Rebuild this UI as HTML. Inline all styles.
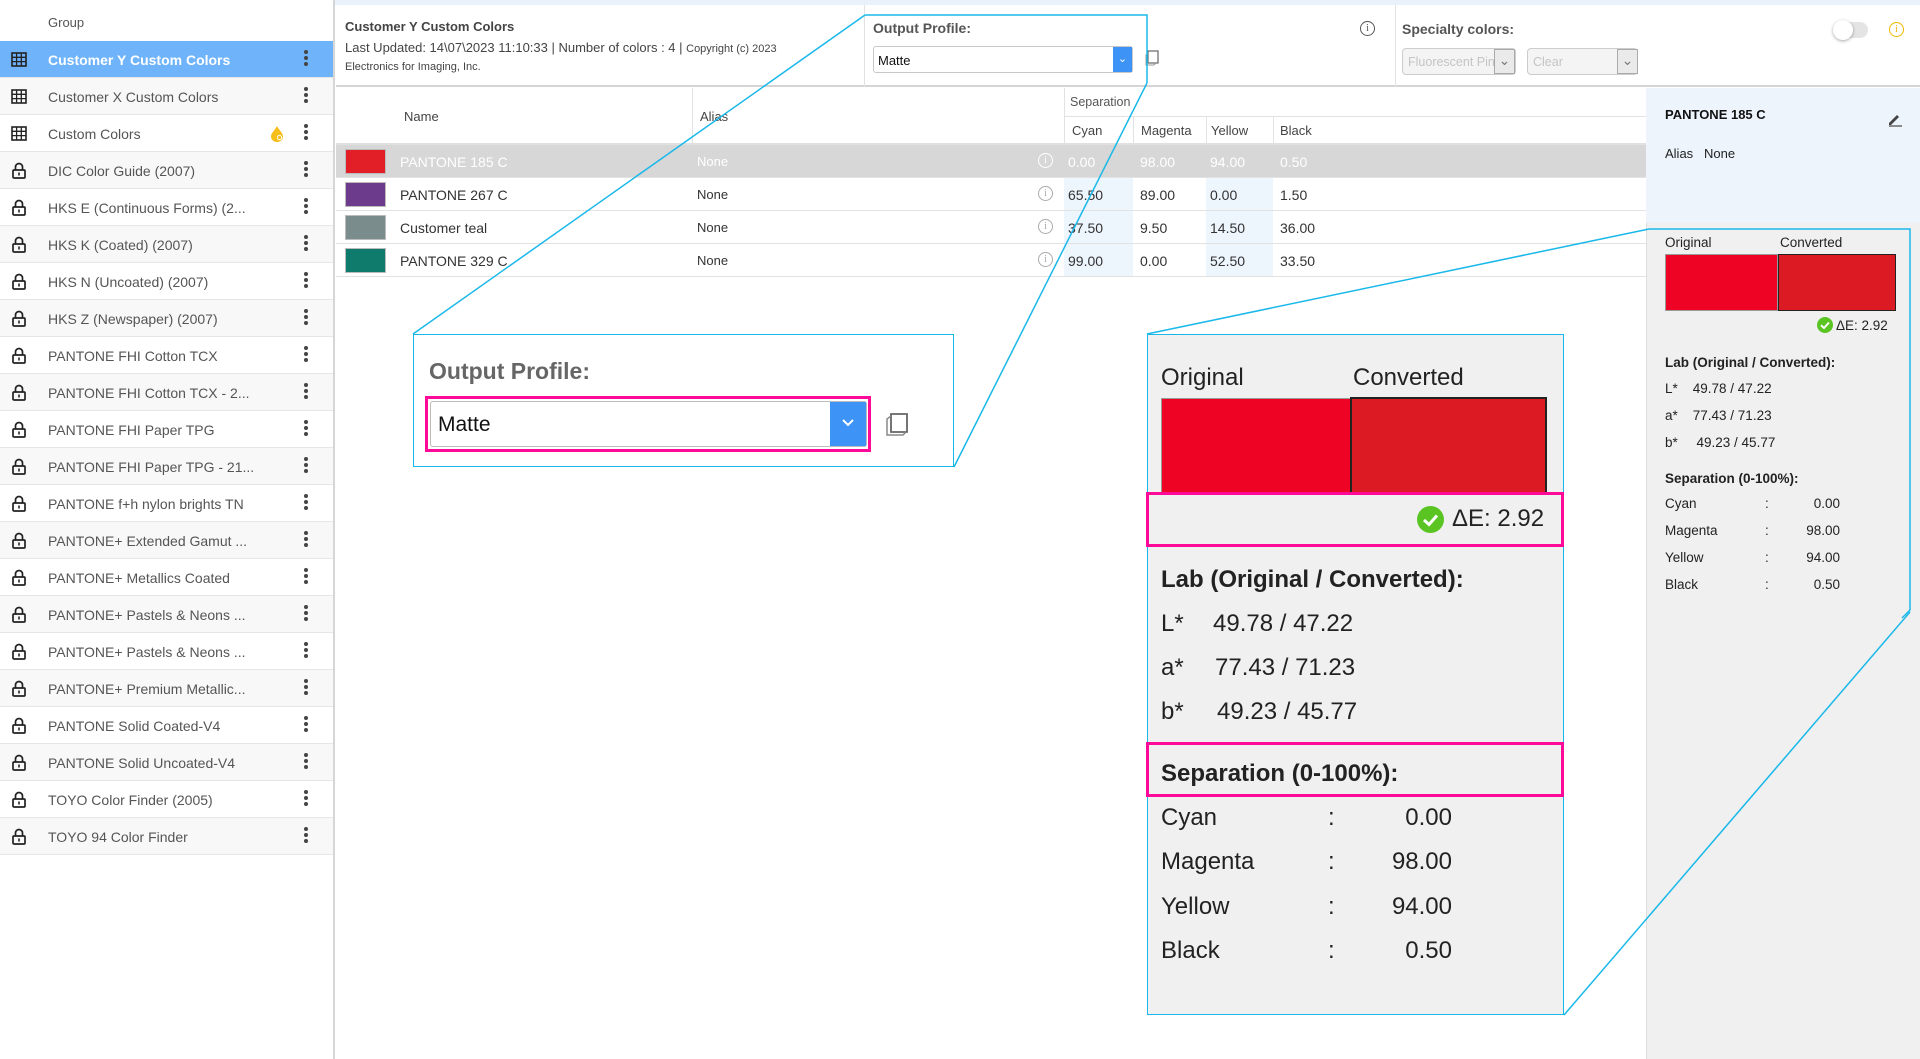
<!DOCTYPE html>
<html><head><meta charset="utf-8">
<style>
*{box-sizing:border-box;margin:0;padding:0}
body{width:1920px;height:1059px;position:relative;overflow:hidden;background:#fff;font-family:"Liberation Sans",sans-serif;color:#333}
.a{position:absolute}
.sb{left:0;top:0;width:335px;height:1059px;border-right:2px solid #d6d6d6;background:#fff}
.row{position:absolute;left:0;width:333px;height:37px;border-bottom:1px solid #e6e6e6;font-size:14px;color:#555}
.row span.t{position:absolute;left:48px;top:11px;white-space:nowrap}
.row .ic{position:absolute;left:11px;top:11px}
.row .k{position:absolute;left:304px;top:9px;width:4px}
.k i{display:block;width:4px;height:4px;border-radius:2px;background:#444;margin-bottom:2px}
.sel{background:#6fb4fa;color:#fff;font-weight:bold}
.alt{background:#f8f8f8}
.tr{position:absolute;left:336px;width:1310px;height:33px;border-bottom:1px solid #e2e2e2;font-size:14px}
.tr .sw{position:absolute;left:9px;top:4px;width:41px;height:25px;border:1px solid #bbb}
.tr span{position:absolute;top:9px}
.blu{position:absolute;top:0;height:32px;background:#edf5fd}
.info{position:absolute;width:15px;height:15px;border:1px solid #aaa;border-radius:50%;font-size:10px;color:#aaa;text-align:center;line-height:13px;font-family:"Liberation Serif",serif}
.big{font-size:24px;color:#222}
.sm{font-size:13.5px;color:#222}
</style></head><body>
<div class="a" style="left:0;top:0;width:1920px;height:5px;background:#e9f2fb"></div>

<!-- sidebar -->
<div class="a sb">
<div class="a" style="left:48px;top:15px;font-size:13px;color:#555">Group</div>
</div>
<div id="rows"></div>
<div class="row sel" style="top:41px"><svg class="ic" width="16" height="15" viewBox="0 0 16 15"><rect x="1" y="1" width="14" height="13" fill="none" stroke="#222" stroke-width="1.6"/><path d="M1 5.3H15M1 9.6H15M5.6 1V14M10.3 1V14" stroke="#222" stroke-width="1.3"/></svg><span class="t">Customer Y Custom Colors</span><div class="k"><i></i><i></i><i></i></div></div>
<div class="row alt" style="top:78px"><svg class="ic" width="16" height="15" viewBox="0 0 16 15"><rect x="1" y="1" width="14" height="13" fill="none" stroke="#222" stroke-width="1.6"/><path d="M1 5.3H15M1 9.6H15M5.6 1V14M10.3 1V14" stroke="#222" stroke-width="1.3"/></svg><span class="t">Customer X Custom Colors</span><div class="k"><i></i><i></i><i></i></div></div>
<div class="row" style="top:115px"><svg class="ic" width="16" height="15" viewBox="0 0 16 15"><rect x="1" y="1" width="14" height="13" fill="none" stroke="#222" stroke-width="1.6"/><path d="M1 5.3H15M1 9.6H15M5.6 1V14M10.3 1V14" stroke="#222" stroke-width="1.3"/></svg><span class="t">Custom Colors</span><svg class="a" style="left:270px;top:10px" width="14" height="17" viewBox="0 0 14 17"><path d="M7 1C5 5 1 8 1 11.5A6 5.5 0 0 0 13 11.5C13 8 9 5 7 1Z" fill="#f5be1a"/><circle cx="9.5" cy="12.5" r="2.6" fill="#fff"/><circle cx="9.5" cy="12.5" r="1.6" fill="#f5be1a"/></svg><div class="k"><i></i><i></i><i></i></div></div>
<script>
var n=["DIC Color Guide (2007)","HKS E (Continuous Forms) (2...","HKS K (Coated) (2007)","HKS N (Uncoated) (2007)","HKS Z (Newspaper) (2007)","PANTONE FHI Cotton TCX","PANTONE FHI Cotton TCX - 2...","PANTONE FHI Paper TPG","PANTONE FHI Paper TPG - 21...","PANTONE f+h nylon brights TN","PANTONE+ Extended Gamut ...","PANTONE+ Metallics Coated","PANTONE+ Pastels & Neons ...","PANTONE+ Pastels & Neons ...","PANTONE+ Premium Metallic...","PANTONE Solid Coated-V4","PANTONE Solid Uncoated-V4","TOYO Color Finder (2005)","TOYO 94 Color Finder"];
var h="";for(var i=0;i<n.length;i++){h+='<div class="row'+(i%2==0?' alt':'')+'" style="top:'+(152+37*i)+'px"><svg class="ic" style="left:12px;top:10px" width="14" height="17" viewBox="0 0 14 17"><path d="M3.5 8V5A3.5 3.5 0 0 1 10.5 5V8" fill="none" stroke="#222" stroke-width="1.7"/><rect x="1" y="8" width="12" height="8" rx="1" fill="none" stroke="#222" stroke-width="1.7"/><rect x="6.2" y="10.5" width="1.6" height="3" fill="#222"/></svg><span class="t">'+n[i].replace(/&/g,"&amp;")+'</span><div class="k"><i></i><i></i><i></i></div></div>';}
document.getElementById("rows").innerHTML=h;
</script>

<!-- header -->
<div class="a" style="left:336px;top:5px;width:1584px;height:82px;background:#fff;border-bottom:2px solid #d4d4d4"></div>
<div class="a" style="left:345px;top:19px;font-size:13px;font-weight:bold;color:#444">Customer Y Custom Colors</div>
<div class="a" style="left:345px;top:40px;font-size:13px;color:#444;white-space:nowrap">Last Updated: 14\07\2023 11:10:33 | Number of colors : 4 | <span style="font-size:11px">Copyright (c) 2023</span></div>
<div class="a" style="left:345px;top:61px;font-size:11px;color:#444">Electronics for Imaging, Inc.</div>
<div class="a" style="left:864px;top:5px;width:1px;height:82px;background:#e2e2e2"></div>
<div class="a" style="left:873px;top:20px;font-size:14px;font-weight:bold;color:#555">Output Profile:</div>
<div class="a" style="left:873px;top:46px;width:260px;height:27px;border:1px solid #c8c8c8;border-radius:3px;background:#fff;font-size:13px;color:#111;padding:6px 4px">Matte</div>
<div class="a" style="left:1113px;top:47px;width:19px;height:25px;background:#3d94f6;color:#fff;font-size:11px;text-align:center;line-height:24px">&#8964;</div>
<svg class="a" style="left:1144px;top:50px" width="16" height="17" viewBox="0 0 16 17"><rect x="4" y="1" width="10" height="12" fill="#fff" stroke="#666" stroke-width="1.2"/><path d="M4 3L2 5V15H10L12 13" fill="none" stroke="#999" stroke-width="1"/></svg>
<div class="info" style="left:1360px;top:21px;border-color:#555;color:#555">i</div>
<div class="a" style="left:1395px;top:5px;width:1px;height:82px;background:#e2e2e2"></div>
<div class="a" style="left:1402px;top:21px;font-size:14px;font-weight:bold;color:#555">Specialty colors:</div>
<div class="a" style="left:1402px;top:48px;width:114px;height:27px;border:1px solid #ccc;border-radius:4px;background:#f4f4f4;font-size:12.5px;color:#c4c4c4;padding:6px 5px;overflow:hidden;white-space:nowrap">Fluorescent Pink</div>
<div class="a" style="left:1494px;top:49px;width:21px;height:25px;border:1px solid #aaa;background:#eaeaea;color:#777;text-align:center;font-size:14px;line-height:20px">&#8964;</div>
<div class="a" style="left:1527px;top:48px;width:111px;height:27px;border:1px solid #ccc;border-radius:4px;background:#f4f4f4;font-size:12.5px;color:#c4c4c4;padding:6px 5px">Clear</div>
<div class="a" style="left:1617px;top:49px;width:21px;height:25px;border:1px solid #aaa;background:#eaeaea;color:#777;text-align:center;font-size:14px;line-height:20px">&#8964;</div>
<div class="a" style="left:1834px;top:22px;width:34px;height:16px;border-radius:8px;background:#e4e4e4"></div>
<div class="a" style="left:1833px;top:20px;width:20px;height:20px;border-radius:50%;background:#fff;box-shadow:0 1px 3px rgba(0,0,0,.35)"></div>
<div class="info" style="left:1889px;top:22px;border-color:#f0b800;color:#f0b800">i</div>

<!-- table -->
<div class="a" style="left:336px;top:88px;width:1310px;height:57px;border-bottom:2px solid #e0e0e0"></div>
<div class="a" style="left:692px;top:88px;width:1px;height:57px;background:#e2e2e2"></div>
<div class="a" style="left:1064px;top:88px;width:1px;height:57px;background:#e2e2e2"></div>
<div class="a" style="left:1064px;top:116px;width:582px;height:1px;background:#e2e2e2"></div>
<div class="a" style="left:1133px;top:117px;width:1px;height:28px;background:#e2e2e2"></div>
<div class="a" style="left:1206px;top:117px;width:1px;height:28px;background:#e2e2e2"></div>
<div class="a" style="left:1273px;top:117px;width:1px;height:28px;background:#e2e2e2"></div>
<div class="a" style="left:404px;top:109px;font-size:13px;color:#444">Name</div>
<div class="a" style="left:700px;top:109px;font-size:13px;color:#444">Alias</div>
<div class="a" style="left:1070px;top:95px;font-size:12.5px;color:#555">Separation</div>
<div class="a" style="left:1072px;top:123px;font-size:13px;color:#444">Cyan</div>
<div class="a" style="left:1141px;top:123px;font-size:13px;color:#444">Magenta</div>
<div class="a" style="left:1211px;top:123px;font-size:13px;color:#444">Yellow</div>
<div class="a" style="left:1280px;top:123px;font-size:13px;color:#444">Black</div>

<div class="tr" style="top:145px;background:#d7d7d7;color:#fff"><div class="sw" style="background:#e21f26"></div><span style="left:64px">PANTONE 185 C</span><span style="left:361px;font-size:13px">None</span><div class="info" style="left:702px;top:8px;border-color:#fff;color:#fff">i</div><span style="left:732px">0.00</span><span style="left:804px">98.00</span><span style="left:874px">94.00</span><span style="left:944px">0.50</span></div>
<div class="tr" style="top:178px"><div class="blu" style="left:728px;width:69px"></div><div class="blu" style="left:870px;width:67px"></div><div class="sw" style="background:#6c3b8c"></div><span style="left:64px">PANTONE 267 C</span><span style="left:361px;font-size:13px">None</span><div class="info" style="left:702px;top:8px">i</div><span style="left:732px">65.50</span><span style="left:804px">89.00</span><span style="left:874px">0.00</span><span style="left:944px">1.50</span></div>
<div class="tr" style="top:211px"><div class="blu" style="left:728px;width:69px"></div><div class="blu" style="left:870px;width:67px"></div><div class="sw" style="background:#7a8c8b"></div><span style="left:64px">Customer teal</span><span style="left:361px;font-size:13px">None</span><div class="info" style="left:702px;top:8px">i</div><span style="left:732px">37.50</span><span style="left:804px">9.50</span><span style="left:874px">14.50</span><span style="left:944px">36.00</span></div>
<div class="tr" style="top:244px"><div class="blu" style="left:728px;width:69px"></div><div class="blu" style="left:870px;width:67px"></div><div class="sw" style="background:#0e7b6c"></div><span style="left:64px">PANTONE 329 C</span><span style="left:361px;font-size:13px">None</span><div class="info" style="left:702px;top:8px">i</div><span style="left:732px">99.00</span><span style="left:804px">0.00</span><span style="left:874px">52.50</span><span style="left:944px">33.50</span></div>

<!-- right panel -->
<div class="a" style="left:1646px;top:88px;width:274px;height:971px;background:#f0f0f0;border-left:1px solid #ddd"></div>
<div class="a" style="left:1646px;top:88px;width:274px;height:135px;background:#edf4fc"></div>
<div class="a" style="left:1665px;top:107px;font-size:13px;font-weight:bold;color:#111">PANTONE 185 C</div>
<svg class="a" style="left:1887px;top:111px" width="16" height="16" viewBox="0 0 16 16"><path d="M2 12L10 4L12 6L4 14H2Z" fill="#444"/><path d="M2 15H15" stroke="#444" stroke-width="1.2"/></svg>
<div class="a" style="left:1665px;top:146px;font-size:13px;color:#222">Alias&nbsp;&nbsp;&nbsp;None</div>
<div class="a sm" style="left:1665px;top:235px">Original</div>
<div class="a sm" style="left:1780px;top:235px">Converted</div>
<div class="a" style="left:1665px;top:254px;width:113px;height:57px;background:#ee0325;border:1px solid #999"></div>
<div class="a" style="left:1778px;top:254px;width:118px;height:57px;background:#dc1a24;border:1px solid #222"></div>
<svg class="a" style="left:1817px;top:317px" width="16" height="16"><circle cx="8" cy="8" r="8" fill="#5ac423"/><path d="M4 8.3L7 11L12 5.5" fill="none" stroke="#fff" stroke-width="2"/></svg>
<div class="a sm" style="left:1836px;top:318px">&Delta;E: 2.92</div>
<div class="a sm" style="left:1665px;top:355px;font-weight:bold">Lab (Original / Converted):</div>
<div class="a sm" style="left:1665px;top:381px">L*&nbsp;&nbsp;&nbsp;&nbsp;49.78 / 47.22</div>
<div class="a sm" style="left:1665px;top:408px">a*&nbsp;&nbsp;&nbsp;&nbsp;77.43 / 71.23</div>
<div class="a sm" style="left:1665px;top:435px">b*&nbsp;&nbsp;&nbsp;&nbsp;&nbsp;49.23 / 45.77</div>
<div class="a sm" style="left:1665px;top:471px;font-weight:bold">Separation (0-100%):</div>
<div class="a sm" style="left:1665px;top:496px">Cyan</div><div class="a sm" style="left:1765px;top:496px">:</div><div class="a sm" style="left:1790px;top:496px;width:50px;text-align:right">0.00</div>
<div class="a sm" style="left:1665px;top:523px">Magenta</div><div class="a sm" style="left:1765px;top:523px">:</div><div class="a sm" style="left:1790px;top:523px;width:50px;text-align:right">98.00</div>
<div class="a sm" style="left:1665px;top:550px">Yellow</div><div class="a sm" style="left:1765px;top:550px">:</div><div class="a sm" style="left:1790px;top:550px;width:50px;text-align:right">94.00</div>
<div class="a sm" style="left:1665px;top:577px">Black</div><div class="a sm" style="left:1765px;top:577px">:</div><div class="a sm" style="left:1790px;top:577px;width:50px;text-align:right">0.50</div>

<!-- callout 1 -->
<div class="a" style="left:413px;top:334px;width:541px;height:133px;background:#fff;border:1.5px solid #1ab8ea"></div>
<div class="a" style="left:429px;top:358px;font-size:23px;font-weight:bold;color:#666">Output Profile:</div>
<div class="a" style="left:425px;top:396px;width:446px;height:56px;border:3px solid #ff0a98"></div>
<div class="a" style="left:430px;top:401px;width:437px;height:46px;border:1px solid #bbb;border-radius:3px;background:#fff;font-size:21px;color:#111;padding:11px 7px">Matte</div>
<div class="a" style="left:830px;top:402px;width:36px;height:44px;background:#3d94f6"></div>
<svg class="a" style="left:841px;top:418px" width="14" height="10"><path d="M2 2L7 7L12 2" fill="none" stroke="#fff" stroke-width="2"/></svg>
<svg class="a" style="left:883px;top:410px" width="28" height="28" viewBox="0 0 28 28"><path d="M8 4H24V22H8Z" fill="#fff" stroke="#666" stroke-width="1.8"/><path d="M8 6L4 9V25H20L23 22" fill="none" stroke="#888" stroke-width="1.5"/></svg>

<!-- callout 2 -->
<div class="a" style="left:1147px;top:334px;width:417px;height:681px;background:#f0f0f0;border:1.5px solid #1ab8ea"></div>
<div class="a big" style="left:1161px;top:364px">Original</div>
<div class="a big" style="left:1353px;top:364px">Converted</div>
<div class="a" style="left:1161px;top:398px;width:190px;height:96px;background:#ee0325;border:1px solid #999;border-bottom:none"></div>
<div class="a" style="left:1350px;top:397px;width:197px;height:97px;background:#dc1a24;border:2px solid #222;border-bottom:none"></div>
<div class="a" style="left:1146px;top:492px;width:418px;height:55px;border:3px solid #ff0a98;background:#f0f0f0"></div>
<svg class="a" style="left:1417px;top:506px" width="27" height="27"><circle cx="13.5" cy="13.5" r="13.5" fill="#5ac423"/><path d="M7 14L12 18.5L20 9.5" fill="none" stroke="#fff" stroke-width="3"/></svg>
<div class="a big" style="left:1452px;top:505px">&Delta;E: 2.92</div>
<div class="a big" style="left:1161px;top:566px;font-weight:bold">Lab (Original / Converted):</div>
<div class="a big" style="left:1161px;top:610px">L*</div><div class="a big" style="left:1213px;top:610px">49.78 / 47.22</div>
<div class="a big" style="left:1161px;top:654px">a*</div><div class="a big" style="left:1215px;top:654px">77.43 / 71.23</div>
<div class="a big" style="left:1161px;top:698px">b*</div><div class="a big" style="left:1217px;top:698px">49.23 / 45.77</div>
<div class="a" style="left:1146px;top:742px;width:418px;height:55px;border:3px solid #ff0a98"></div>
<div class="a big" style="left:1161px;top:760px;font-weight:bold">Separation (0-100%):</div>
<div class="a big" style="left:1161px;top:804px">Cyan</div><div class="a big" style="left:1328px;top:804px">:</div><div class="a big" style="left:1370px;top:804px;width:82px;text-align:right">0.00</div>
<div class="a big" style="left:1161px;top:848px">Magenta</div><div class="a big" style="left:1328px;top:848px">:</div><div class="a big" style="left:1370px;top:848px;width:82px;text-align:right">98.00</div>
<div class="a big" style="left:1161px;top:893px">Yellow</div><div class="a big" style="left:1328px;top:893px">:</div><div class="a big" style="left:1370px;top:893px;width:82px;text-align:right">94.00</div>
<div class="a big" style="left:1161px;top:937px">Black</div><div class="a big" style="left:1328px;top:937px">:</div><div class="a big" style="left:1370px;top:937px;width:82px;text-align:right">0.50</div>

<!-- cyan overlay lines -->
<svg class="a" style="left:0;top:0" width="1920" height="1059">
<g fill="none" stroke="#1ab8ea" stroke-width="1.5">
<path d="M865 15H1147V83"/>
<path d="M865 15L413 334"/>
<path d="M1147 83L954 467"/>
<path d="M1649 229H1910V610L1902 618"/>
<path d="M1649 229L1147 334"/>
<path d="M1910 612L1564 1015"/>
</g>
</svg>
</body></html>
